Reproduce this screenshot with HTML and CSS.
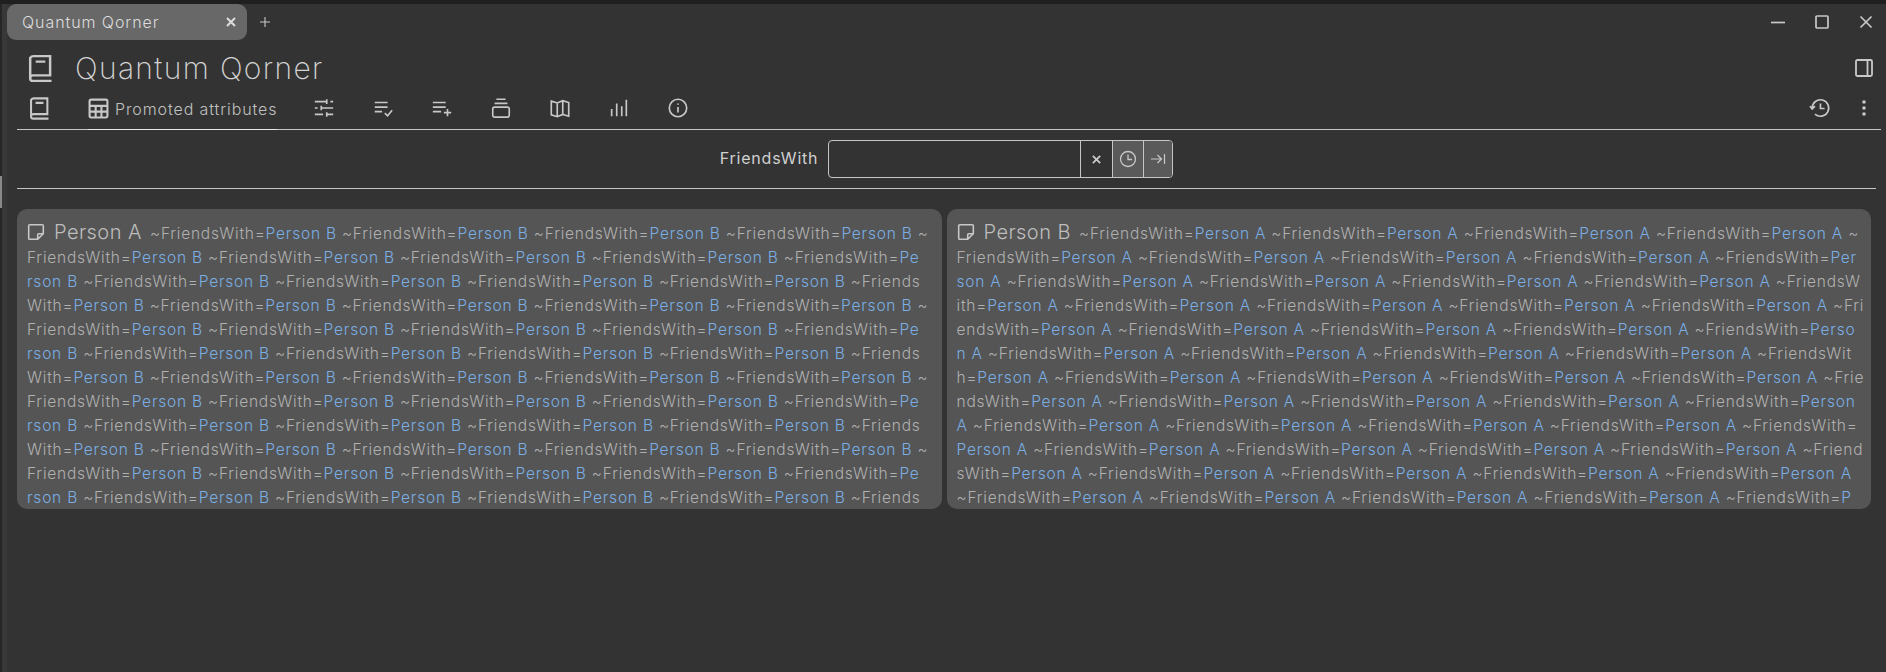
FILE: index.html
```html
<!DOCTYPE html>
<html lang="en">
<head>
<meta charset="utf-8">
<title>Quantum Qorner</title>
<link rel="stylesheet" href="styles.css">
</head>
<body>
<div class="app">
  <aside class="rail"><div class="rail-thumb"></div></aside>
  <main class="main">
    <header class="tabbar">
      <div class="tab"><span class="tab-title">Quantum Qorner</span>
        <svg class="ico-close" viewBox="0 0 12 12"><path d="M2 2l8 8M10 2l-8 8"/></svg></div>
      <svg class="ico-plus" viewBox="0 0 12 12"><path d="M6 1v10M1 6h10"/></svg>
      <div class="win-controls">
        <svg viewBox="0 0 16 16"><path d="M1 8.500h14"/></svg>
        <svg viewBox="0 0 16 16"><rect x="2" y="2" width="12" height="12" rx="1"/></svg>
        <svg viewBox="0 0 16 16"><path d="M2.500 2.500l11 11M13.500 2.500l-11 11"/></svg>
      </div>
    </header>
    <section class="title-row">
      <svg class="ico-book-lg" viewBox="0 0 24 24"><path d="M19 3H7a3 3 0 0 0-2.500 1.300V19a2 2 0 0 1 2-2H19V3zM4.500 19a2 2 0 0 0 2 2H20M8.500 7h7"/></svg>
      <h1 class="title">Quantum Qorner</h1>
      <svg class="ico-panel" viewBox="0 0 18 18"><rect x="1" y="1" width="16" height="16" rx="1.500"/><path d="M12.500 1v16"/></svg>
    </section>
    <nav class="ribbon">
      <svg class="ico ico-book" viewBox="0 0 24 24"><path d="M19 3H7a3 3 0 0 0-2.500 1.300V19a2 2 0 0 1 2-2H19V3zM4.500 19a2 2 0 0 0 2 2H20M8.500 7h7"/></svg>
      <div class="rib-tab">
        <svg class="ico ico-table" viewBox="0 0 20 20"><rect x="1.500" y="1.500" width="17" height="17" rx="1.500" class="thick"/><path class="thick" d="M1.500 7.500h17M1.500 13h17M7.300 7.500v11M12.800 7.500v11"/></svg>
        <span class="rib-label">Promoted attributes</span>
      </div>
      <svg class="ico rib-slide" viewBox="0 0 24 24"><path d="M2 5h13M19 5h3M15 2.500v5M2 12h3M9 12h13M9 9.500v5M2 19h9M15 19h7M15 16.500v5"/></svg>
      <svg class="ico rib-item" viewBox="0 0 24 24"><path d="M3 6h14M3 11h14M3 16h8M14 17.500l3 3 5-6"/></svg>
      <svg class="ico rib-item" viewBox="0 0 24 24"><path d="M2 6h14M2 11h14M2 16h9M18 13v8M14 17h8"/></svg>
      <svg class="ico rib-item" viewBox="0 0 24 24"><path d="M7 2.500h10M5 7h14"/><rect x="3" y="11" width="18" height="11" rx="2"/></svg>
      <svg class="ico rib-item" viewBox="0 0 24 24"><path d="M2.500 4.500l6.500 2 6-2.500 6.500 2v15l-6.500-2-6 2.500-6.500-2zM9 6.500V21M15 4v14.500"/></svg>
      <svg class="ico rib-item" viewBox="0 0 24 24"><path d="M4 21v-8M9.500 21V7M15 21V10M20 21V3"/></svg>
      <svg class="ico rib-item" viewBox="0 0 24 24"><circle cx="12" cy="12" r="9.500"/><path d="M12 11v6M12 7v1.500"/></svg>
      <div class="rib-right">
        <svg class="ico" viewBox="0 0 24 24"><path d="M3.500 12a9 9 0 1 1 3 6.700M1 10l2.500 3 3-3M12.500 7v5.500H17"/></svg>
        <svg class="ico-dots" viewBox="0 0 6 18"><circle cx="3" cy="3" r="1.800"/><circle cx="3" cy="9" r="1.800"/><circle cx="3" cy="15" r="1.800"/></svg>
      </div>
    </nav>
    <section class="attr-row">
      <label class="attr-label">FriendsWith</label>
      <div class="attr-input">
        <div class="field"></div>
        <div class="btn"><svg viewBox="0 0 12 12" class="ico-x"><path d="M2 2l8 8M10 2l-8 8"/></svg></div>
        <div class="btn btn-on btn-mid"><svg viewBox="0 0 18 18" class="ico-clock"><circle cx="9" cy="9" r="7.500"/><path d="M9 4.500V9.500H13"/></svg></div>
        <div class="btn btn-on btn-last"><svg viewBox="0 0 16 16" class="ico-end"><path d="M1 8h10M7.500 4l4 4-4 4M14.500 3v10"/></svg></div>
      </div>
    </section>
    <section class="cards">
      <article class="card">
        <div class="line"><svg class="ico-note" viewBox="0 0 16 16"><path d="M14.500 9.500V2.500a1 1 0 0 0-1-1h-11a1 1 0 0 0-1 1v11a1 1 0 0 0 1 1h7zM14.500 9.500h-4a1 1 0 0 0-1 1v4"/></svg><span class="note-name">Person A</span> <i>~FriendsWith=</i><a>Person B</a> <i>~FriendsWith=</i><a>Person B</a> <i>~FriendsWith=</i><a>Person B</a> <i>~FriendsWith=</i><a>Person B</a> <i>~</i></div>
        <div class="line"><i>FriendsWith=</i><a>Person B</a> <i>~FriendsWith=</i><a>Person B</a> <i>~FriendsWith=</i><a>Person B</a> <i>~FriendsWith=</i><a>Person B</a> <i>~FriendsWith=</i><a>Pe</a></div>
        <div class="line"><a>rson B</a> <i>~FriendsWith=</i><a>Person B</a> <i>~FriendsWith=</i><a>Person B</a> <i>~FriendsWith=</i><a>Person B</a> <i>~FriendsWith=</i><a>Person B</a> <i>~Friends</i></div>
        <div class="line"><i>With=</i><a>Person B</a> <i>~FriendsWith=</i><a>Person B</a> <i>~FriendsWith=</i><a>Person B</a> <i>~FriendsWith=</i><a>Person B</a> <i>~FriendsWith=</i><a>Person B</a> <i>~</i></div>
        <div class="line"><i>FriendsWith=</i><a>Person B</a> <i>~FriendsWith=</i><a>Person B</a> <i>~FriendsWith=</i><a>Person B</a> <i>~FriendsWith=</i><a>Person B</a> <i>~FriendsWith=</i><a>Pe</a></div>
        <div class="line"><a>rson B</a> <i>~FriendsWith=</i><a>Person B</a> <i>~FriendsWith=</i><a>Person B</a> <i>~FriendsWith=</i><a>Person B</a> <i>~FriendsWith=</i><a>Person B</a> <i>~Friends</i></div>
        <div class="line"><i>With=</i><a>Person B</a> <i>~FriendsWith=</i><a>Person B</a> <i>~FriendsWith=</i><a>Person B</a> <i>~FriendsWith=</i><a>Person B</a> <i>~FriendsWith=</i><a>Person B</a> <i>~</i></div>
        <div class="line"><i>FriendsWith=</i><a>Person B</a> <i>~FriendsWith=</i><a>Person B</a> <i>~FriendsWith=</i><a>Person B</a> <i>~FriendsWith=</i><a>Person B</a> <i>~FriendsWith=</i><a>Pe</a></div>
        <div class="line"><a>rson B</a> <i>~FriendsWith=</i><a>Person B</a> <i>~FriendsWith=</i><a>Person B</a> <i>~FriendsWith=</i><a>Person B</a> <i>~FriendsWith=</i><a>Person B</a> <i>~Friends</i></div>
        <div class="line"><i>With=</i><a>Person B</a> <i>~FriendsWith=</i><a>Person B</a> <i>~FriendsWith=</i><a>Person B</a> <i>~FriendsWith=</i><a>Person B</a> <i>~FriendsWith=</i><a>Person B</a> <i>~</i></div>
        <div class="line"><i>FriendsWith=</i><a>Person B</a> <i>~FriendsWith=</i><a>Person B</a> <i>~FriendsWith=</i><a>Person B</a> <i>~FriendsWith=</i><a>Person B</a> <i>~FriendsWith=</i><a>Pe</a></div>
        <div class="line"><a>rson B</a> <i>~FriendsWith=</i><a>Person B</a> <i>~FriendsWith=</i><a>Person B</a> <i>~FriendsWith=</i><a>Person B</a> <i>~FriendsWith=</i><a>Person B</a> <i>~Friends</i></div>
      </article>
      <article class="card">
        <div class="line"><svg class="ico-note" viewBox="0 0 16 16"><path d="M14.500 9.500V2.500a1 1 0 0 0-1-1h-11a1 1 0 0 0-1 1v11a1 1 0 0 0 1 1h7zM14.500 9.500h-4a1 1 0 0 0-1 1v4"/></svg><span class="note-name">Person B</span> <i>~FriendsWith=</i><a>Person A</a> <i>~FriendsWith=</i><a>Person A</a> <i>~FriendsWith=</i><a>Person A</a> <i>~FriendsWith=</i><a>Person A</a> <i>~</i></div>
        <div class="line"><i>FriendsWith=</i><a>Person A</a> <i>~FriendsWith=</i><a>Person A</a> <i>~FriendsWith=</i><a>Person A</a> <i>~FriendsWith=</i><a>Person A</a> <i>~FriendsWith=</i><a>Per</a></div>
        <div class="line"><a>son A</a> <i>~FriendsWith=</i><a>Person A</a> <i>~FriendsWith=</i><a>Person A</a> <i>~FriendsWith=</i><a>Person A</a> <i>~FriendsWith=</i><a>Person A</a> <i>~FriendsW</i></div>
        <div class="line"><i>ith=</i><a>Person A</a> <i>~FriendsWith=</i><a>Person A</a> <i>~FriendsWith=</i><a>Person A</a> <i>~FriendsWith=</i><a>Person A</a> <i>~FriendsWith=</i><a>Person A</a> <i>~Fri</i></div>
        <div class="line"><i>endsWith=</i><a>Person A</a> <i>~FriendsWith=</i><a>Person A</a> <i>~FriendsWith=</i><a>Person A</a> <i>~FriendsWith=</i><a>Person A</a> <i>~FriendsWith=</i><a>Perso</a></div>
        <div class="line"><a>n A</a> <i>~FriendsWith=</i><a>Person A</a> <i>~FriendsWith=</i><a>Person A</a> <i>~FriendsWith=</i><a>Person A</a> <i>~FriendsWith=</i><a>Person A</a> <i>~FriendsWit</i></div>
        <div class="line"><i>h=</i><a>Person A</a> <i>~FriendsWith=</i><a>Person A</a> <i>~FriendsWith=</i><a>Person A</a> <i>~FriendsWith=</i><a>Person A</a> <i>~FriendsWith=</i><a>Person A</a> <i>~Frie</i></div>
        <div class="line"><i>ndsWith=</i><a>Person A</a> <i>~FriendsWith=</i><a>Person A</a> <i>~FriendsWith=</i><a>Person A</a> <i>~FriendsWith=</i><a>Person A</a> <i>~FriendsWith=</i><a>Person</a></div>
        <div class="line"><a>A</a> <i>~FriendsWith=</i><a>Person A</a> <i>~FriendsWith=</i><a>Person A</a> <i>~FriendsWith=</i><a>Person A</a> <i>~FriendsWith=</i><a>Person A</a> <i>~FriendsWith=</i></div>
        <div class="line"><a>Person A</a> <i>~FriendsWith=</i><a>Person A</a> <i>~FriendsWith=</i><a>Person A</a> <i>~FriendsWith=</i><a>Person A</a> <i>~FriendsWith=</i><a>Person A</a> <i>~Friend</i></div>
        <div class="line"><i>sWith=</i><a>Person A</a> <i>~FriendsWith=</i><a>Person A</a> <i>~FriendsWith=</i><a>Person A</a> <i>~FriendsWith=</i><a>Person A</a> <i>~FriendsWith=</i><a>Person A</a></div>
        <div class="line"><i>~FriendsWith=</i><a>Person A</a> <i>~FriendsWith=</i><a>Person A</a> <i>~FriendsWith=</i><a>Person A</a> <i>~FriendsWith=</i><a>Person A</a> <i>~FriendsWith=</i><a>P</a></div>
      </article>
    </section>
  </main>
</div>
</body>
</html>
```
FILE: styles.css
```css
* { box-sizing: border-box; }
html, body { margin: 0; height: 100%; }
body {
  background: #333;
  color: #c8c8c8;
  font-family: Inter, "Liberation Sans", sans-serif;
  font-weight: 300;
  overflow: hidden;
}
svg { fill: none; stroke: #c8c8c8; stroke-width: 1.8; display: block; flex: none; }
.app { display: flex; height: 672px; border-top: 4px solid #1f1f1f; }
.rail { position: relative; width: 7px; background: #383838; border-left: 2px solid #262626; flex: none; }
.rail-thumb { position: absolute; left: -2px; top: 172px; width: 2px; height: 32px; background: #8a8a8a; }
.main { flex: 1; min-width: 0; display: flex; flex-direction: column; }

.tabbar { height: 36px; flex: none; display: flex; align-items: center; }
.tab {
  width: 240px; height: 36px; display: flex; align-items: center; justify-content: space-between;
  padding: 0 10px 0 15px; background: #686868; border-radius: 9px;
  font-size: 16px; color: #dcdcdc; letter-spacing: .93px;
}
.ico-close { width: 12px; height: 12px; stroke: #ddd; stroke-width: 2; }
.ico-plus { width: 12px; height: 12px; margin-left: 12px; stroke-width: 1.100; }
.win-controls { margin-left: auto; display: flex; gap: 28px; padding-right: 12px; }
.win-controls svg { width: 16px; height: 16px; stroke-width: 1.700; }

.title-row { height: 52px; flex: none; display: flex; align-items: center; padding: 4px 13px 0 17px; }
.ico-book-lg { width: 33px; height: 33px; }
.title { margin: 0 0 0 18px; font-size: 30px; font-weight: 200; letter-spacing: 1.350px; color: #d4d4d4; }
.ico-panel { width: 18px; height: 18px; margin-left: auto; }

.ribbon {
  height: 38px; flex: none; margin: 0 5px 0 10px; padding: 0 0 5px 9px; display: flex; align-items: center;
  border-bottom: 1px solid #c6c6c6;
}
.ico { width: 22px; height: 22px; }
.ico-book { width: 27px; height: 27px; }
.rib-tab {
  align-self: stretch; margin: 0 0 -6px 35px; padding-bottom: 5px;
  display: flex; align-items: center; gap: 6px;
  border-bottom: 1px solid #e8e8e8;
  font-size: 16px; letter-spacing: .9px; color: #c0c0c0;
}
.rib-label { margin-top: 2px; }
.ico-table { width: 21px; height: 21px; }
.thick { stroke-width: 2; }
.rib-slide { margin-left: 36px; }
.rib-item { margin-left: 37px; }
.rib-right { margin-left: auto; display: flex; align-items: center; gap: 30px; padding-right: 14px; }
.ico-dots { width: 6px; height: 18px; fill: #c8c8c8; stroke: none; }

.attr-row {
  height: 59px; flex: none; margin: 0 10px; display: flex; align-items: center; justify-content: center;
  border-bottom: 1px solid #c6c6c6;
}
.attr-label { font-size: 16px; color: #d0d0d0; letter-spacing: .8px; margin: 0 10px 2px 0; font-weight: 400; }
.attr-input { width: 345px; height: 38px; display: flex; border: 1px solid #c6c6c6; border-radius: 4px; overflow: hidden; }
.field { flex: 1; }
.btn { width: 32px; display: flex; align-items: center; justify-content: center; border-left: 1px solid #c6c6c6; }
.btn-on { background: #5a5a5a; }
.btn-mid { width: 31px; }
.btn-last { width: 29px; }
.ico-x { width: 11px; height: 11px; stroke-width: 2; }
.ico-clock { width: 18px; height: 18px; stroke-width: 1.300; }
.ico-end { width: 16px; height: 16px; stroke-width: 1.200; }

.cards { display: flex; gap: 5px; margin: 20px 15px 0 10px; }
.card {
  flex: 1; min-width: 0; height: 300px; background: #555; border-radius: 10px;
  padding: 13px 0 0 10px; overflow: hidden; font-size: 15.500px; letter-spacing: .78px; color: #b0b0b0;
}
.line { height: 24px; line-height: 24px; white-space: nowrap; }
.line i { font-style: normal; }
.line a { color: #7aaee4; }
.ico-note { display: inline-block; width: 18px; height: 18px; vertical-align: -2px; margin-right: 9px; stroke-width: 1.400; }
.note-name { font-size: 20px; line-height: 0; margin-right: 3px; letter-spacing: .45px; color: #bdbdbd; }
```
